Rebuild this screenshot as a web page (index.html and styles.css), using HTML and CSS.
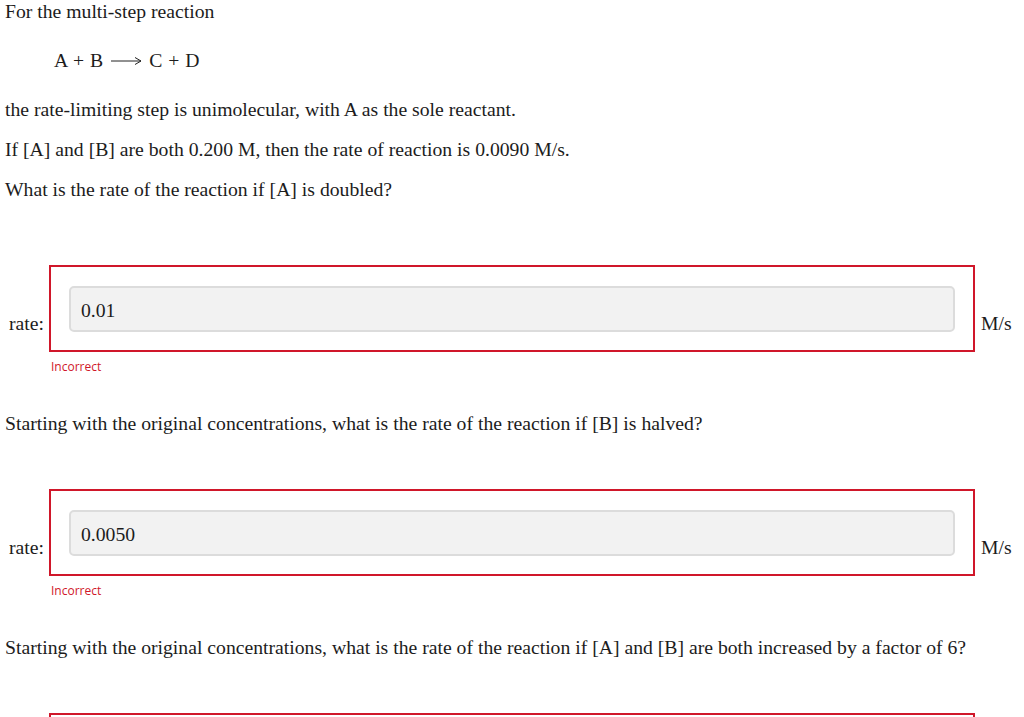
FILE: index.html
```html
<!DOCTYPE html>
<html>
<head>
<meta charset="utf-8">
<link rel="stylesheet" href="styles.css">
</head>
<body>
<p class="line first">For the multi-step reaction</p>
<div class="equation">
  <span>A + B</span>
  <svg class="arrow" width="31" height="10" viewBox="0 0 31 10"><line x1="0" y1="5" x2="30" y2="5" stroke="#222" stroke-width="1"/><path d="M24 1.5 L30 5 L24 8.5" fill="none" stroke="#222" stroke-width="1"/></svg>
  <span>C + D</span>
</div>
<p class="line">the rate-limiting step is unimolecular, with A as the sole reactant.</p>
<p class="line">If [A] and [B] are both 0.200 M, then the rate of reaction is 0.0090 M/s.</p>
<p class="line">What is the rate of the reaction if [A] is doubled?</p>

<div class="answer a1">
  <span class="label">rate:</span>
  <div class="box"><div class="input">0.01</div></div>
  <span class="unit">M/s</span>
</div>
<div class="feedback">Incorrect</div>

<p class="line q">Starting with the original concentrations, what is the rate of the reaction if [B] is halved?</p>
<div class="answer">
  <span class="label">rate:</span>
  <div class="box"><div class="input">0.0050</div></div>
  <span class="unit">M/s</span>
</div>
<div class="feedback">Incorrect</div>

<p class="line q">Starting with the original concentrations, what is the rate of the reaction if [A] and [B] are both increased by a factor of 6?</p>
<div class="answer">
  <span class="label"></span>
  <div class="box"><div class="input"></div></div>
</div>
</body>
</html>
```
FILE: styles.css
```css
html, body {
  margin: 0;
  padding: 0;
  background: #fff;
}
body {
  font-family: "Liberation Serif", "Times New Roman", serif;
  font-size: 19.7px;
  line-height: 22px;
  color: #1c1c1c;
  padding-left: 5px;
  overflow: hidden;
  height: 717px;
}
.line {
  margin: 18px 0 0 0;
  white-space: nowrap;
}
.line.first {
  margin-top: 0;
}
.equation {
  display: flex;
  align-items: center;
  gap: 7px;
  margin: 27px 0 27px 49px;
  height: 22px;
  word-spacing: 1px;
}
.equation .arrow {
  margin-top: 1px;
  margin-left: 1px;
}
.answer {
  display: flex;
  align-items: flex-end;
  margin-top: 55px;
}
.answer.a1 {
  margin-top: 65px;
}
.label {
  width: 44px;
  padding-left: 4px;
  box-sizing: border-box;
  margin-bottom: 18px;
}
.unit {
  margin-left: 6px;
  margin-bottom: 18px;
}
.box {
  width: 926px;
  height: 87px;
  box-sizing: border-box;
  border: 2px solid #d0172a;
  padding: 19px 18px 18px 18px;
}
.input {
  height: 46px;
  box-sizing: border-box;
  border: 2px solid #dcdcdc;
  border-radius: 5px;
  background: #f2f2f2;
  padding: 11px 10px 9px 10px;
  line-height: 22px;
}
.feedback {
  font-family: "Open Sans", "Noto Sans", sans-serif;
  font-size: 12px;
  line-height: 16px;
  color: #d0172a;
  margin: 7px 0 0 46px;
}
.q {
  margin-top: 37px;
}
```
